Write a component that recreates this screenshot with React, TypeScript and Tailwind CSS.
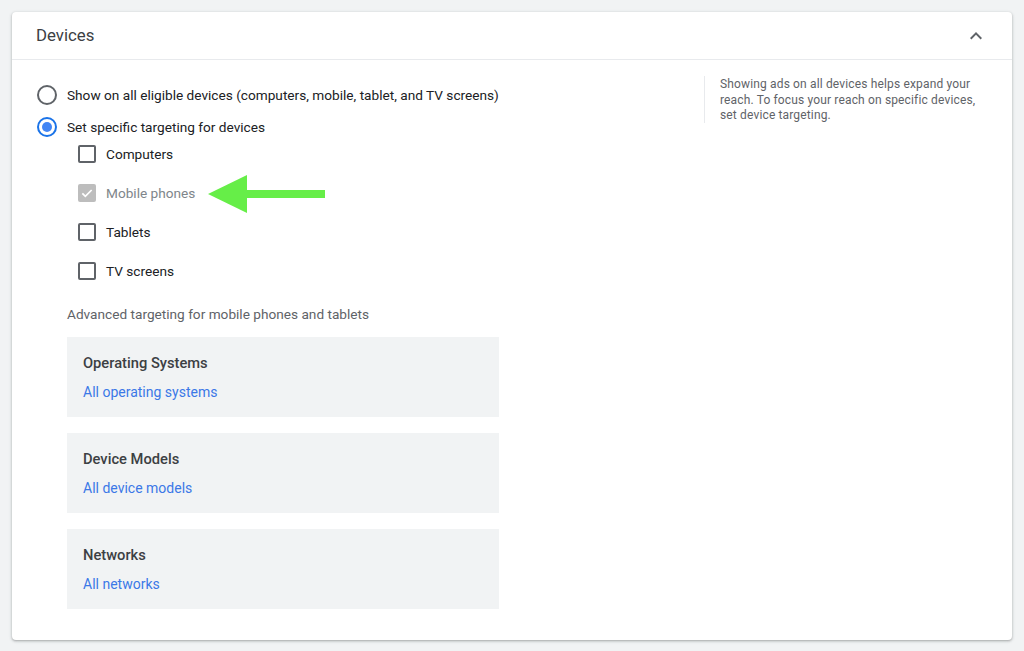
import React from "react";

function Radio({ checked }: { checked?: boolean }) {
  return (
    <span
      className={`flex h-5 w-5 shrink-0 items-center justify-center rounded-full border-2 ${
        checked ? "border-[#1a73e8]" : "border-[#5f6368]"
      }`}
    >
      {checked && <span className="h-[10px] w-[10px] rounded-full bg-[#4285f4]" />}
    </span>
  );
}

function Checkbox({ checked, disabled }: { checked?: boolean; disabled?: boolean }) {
  if (checked && disabled) {
    return (
      <span className="flex h-[18px] w-[18px] shrink-0 items-center justify-center rounded-[2px] bg-[#bdbdbd]">
        <svg viewBox="0 0 24 24" className="h-[16px] w-[16px]" fill="none" stroke="white" strokeWidth="2.6">
          <path d="M5 12.5l4.5 4.5L19 7.5" />
        </svg>
      </span>
    );
  }
  return <span className="h-[18px] w-[18px] shrink-0 rounded-[2px] border-2 border-[#5f6368]" />;
}

function TargetBox({ title, link }: { title: string; link: string }) {
  return (
    <div className="h-[80px] w-[432px] bg-[#f1f3f4] px-4 pt-4">
      <div className="text-[14.7px] font-medium leading-5 text-[#3c4043]">{title}</div>
      <div className="mt-[9px] text-[14px] leading-5 text-[#3b78e7]">{link}</div>
    </div>
  );
}

export default function App() {
  const font = { fontFamily: "Roboto, 'Noto Sans', Arial, sans-serif" };
  return (
    <div className="h-[651px] w-full bg-[#f1f3f4] p-3" style={font}>
      <div className="rounded-[4px] bg-white shadow-[0_1px_2px_rgba(60,64,67,0.3),0_1px_3px_1px_rgba(60,64,67,0.12)]">
        <div className="flex h-12 items-center justify-between border-b border-[#e8eaed] px-6">
          <span className="text-[16.8px] text-[#3c4043]">Devices</span>
          <svg viewBox="0 0 24 24" className="h-6 w-6" fill="#5f6368">
            <path d="M12 8l-6 6 1.41 1.41L12 10.83l4.59 4.58L18 14z" />
          </svg>
        </div>
        <div className="flex px-6 pb-[31px] pt-[19px]">
          <div className="flex-1">
            <div className="flex h-8 items-center gap-[10px] pl-px text-[13.65px] text-[#202124]">
              <Radio />
              <span>Show on all eligible devices (computers, mobile, tablet, and TV screens)</span>
            </div>
            <div className="flex h-8 items-center gap-[10px] pl-px text-[13.65px] text-[#202124]">
              <Radio checked />
              <span>Set specific targeting for devices</span>
            </div>
            <div className="-mt-px flex flex-col gap-[15px] pl-[42px]">
              <div className="flex h-6 items-center gap-[10px] text-[13.65px] text-[#202124]">
                <Checkbox />
                <span>Computers</span>
              </div>
              <div className="relative flex h-6 items-center gap-[10px] text-[13.65px] text-[#80868b]">
                <Checkbox checked disabled />
                <span>Mobile phones</span>
                <svg
                  viewBox="0 0 118 40"
                  className="absolute left-[130px] top-[-7px] h-[40px] w-[118px]"
                >
                  <polygon points="0,20 39,1 39,39" fill="#66ee48" />
                  <rect x="38" y="16" width="79" height="8" fill="#66ee48" />
                </svg>
              </div>
              <div className="flex h-6 items-center gap-[10px] text-[13.65px] text-[#202124]">
                <Checkbox />
                <span>Tablets</span>
              </div>
              <div className="flex h-6 items-center gap-[10px] text-[13.65px] text-[#202124]">
                <Checkbox />
                <span>TV screens</span>
              </div>
            </div>
            <div className="mt-[21px] pl-[31px] text-[13.65px] leading-5 text-[#5f6368]">
              Advanced targeting for mobile phones and tablets
            </div>
            <div className="mt-[13px] flex flex-col gap-4 pl-[31px]">
              <TargetBox title="Operating Systems" link="All operating systems" />
              <TargetBox title="Device Models" link="All device models" />
              <TargetBox title="Networks" link="All networks" />
            </div>
          </div>
          <aside className="mr-[6px] -mt-[3px] h-[47px] w-[278px] self-start border-l border-[#e8eaed] pl-[15px] pt-px text-[12px] leading-[15.5px] tracking-[0.15px] text-[#5f6368]">
            Showing ads on all devices helps expand your reach. To focus your reach on specific devices, set device targeting.
          </aside>
        </div>
      </div>
    </div>
  );
}
